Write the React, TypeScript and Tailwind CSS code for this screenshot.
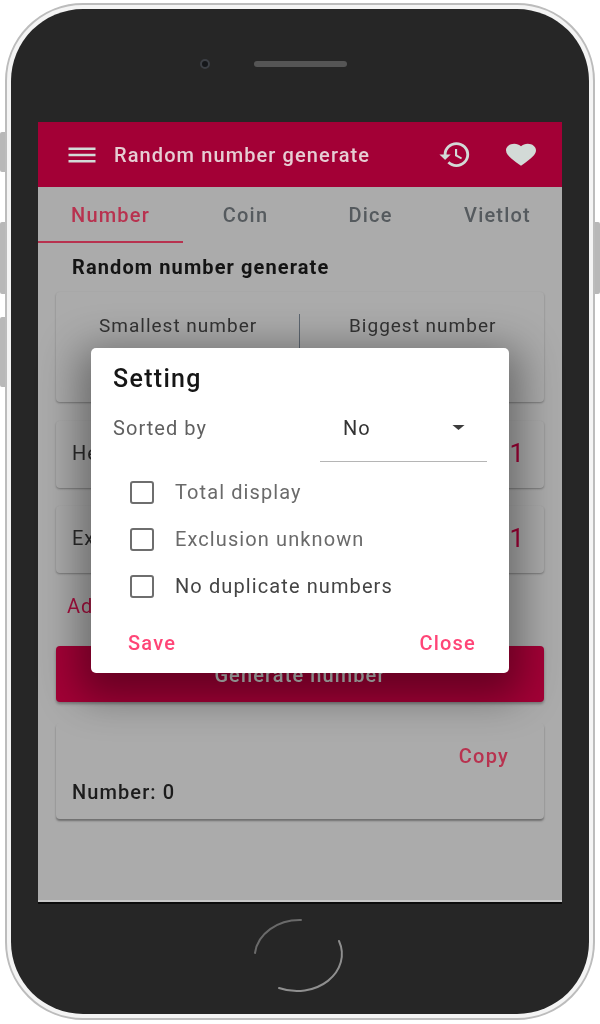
import { MdArrowDropDown, MdFavorite, MdHistory, MdMenu } from 'react-icons/md';

const tabs = [
  { label: 'Number', width: 'w-[145px]' },
  { label: 'Coin', width: 'w-[125px]' },
  { label: 'Dice', width: 'w-[125px]' },
  { label: 'Vietlot', width: 'w-[129px]' },
];
const options = ['Total display', 'Exclusion unknown', 'No duplicate numbers'];

function StepperCard({ label }: { label: string }) {
  return (
    <div className="flex h-[67px] items-center justify-between rounded-[4px] bg-[#ababab] pb-[3px] pl-4 pr-[20px] shadow-[0_1px_2px_rgba(0,0,0,0.3)]">
      <span className="text-[20px] tracking-[1px] text-[#2b2b2b]">{label}</span>
      <span className="text-[26px] text-[#a30036]">1</span>
    </div>
  );
}

export default function App() {
  return (
    <div className="h-[1024px] w-[600px] overflow-hidden bg-white pl-[5px] pt-[3px] font-['Roboto',sans-serif] blur-[0.7px]">
      <div className="relative h-[1017px] w-[590px] rounded-[78px] border-2 border-[#bcbcbc] bg-[#f4f4f4] p-[4px]">
        {/* side buttons */}
        <div className="absolute left-[-7px] top-[127px] h-[40px] w-[5px] rounded-l-[2px] bg-[#b8b8b8]" />
        <div className="absolute left-[-7px] top-[217px] h-[72px] w-[5px] rounded-l-[2px] bg-[#b8b8b8]" />
        <div className="absolute left-[-7px] top-[312px] h-[70px] w-[5px] rounded-l-[2px] bg-[#b8b8b8]" />
        <div className="absolute right-[-7px] top-[217px] h-[72px] w-[5px] rounded-r-[2px] bg-[#b8b8b8]" />

        <div className="flex h-full flex-col rounded-[72px] bg-[#262626] px-[27px]">
          {/* camera + speaker */}
          <div className="flex h-[113px] shrink-0 items-center justify-center gap-[44px] pb-[4px] pr-[54px]">
            <div className="h-[10px] w-[10px] rounded-full border-2 border-[#3c3f45] bg-[#15171a]" />
            <div className="h-[6px] w-[93px] rounded-full bg-[#555555]" />
          </div>

          {/* screen */}
          <div className="relative flex h-[780px] shrink-0 flex-col border-b-2 border-[#c8c8c8] bg-[#ababab] shadow-[0_2px_0_#0c0c0c]">
            <div className="flex h-[65px] shrink-0 items-center bg-[#a30036] pl-[26px] pr-[23px] text-[#d3dad7]">
              <MdMenu className="h-[30px] w-[36px]" preserveAspectRatio="none" />
              <span className="ml-[14px] flex-1 text-[20px] font-medium tracking-[1.1px] text-[#e6cdd3]">Random number generate</span>
              <MdHistory className="mr-[31px] h-[33px] w-[34px]" preserveAspectRatio="none" />
              <MdFavorite className="h-[29px] w-[36px]" preserveAspectRatio="none" />
            </div>

            <div className="flex h-[56px] shrink-0">
              {tabs.map((tab, i) => (
                <div
                  key={tab.label}
                  className={`flex items-center justify-center text-[20px] font-medium tracking-[1.2px] ${tab.width} ${
                    i === 0 ? 'border-b-2 border-[#b8324f] pt-[2px] text-[#b8324f]' : 'text-[#555a5e]'
                  }`}
                >
                  {tab.label}
                </div>
              ))}
            </div>

            <div className="flex flex-col px-[18px]">
              <h1 className="mt-[11px] pl-[16px] text-[20px] font-bold leading-[26px] tracking-[1.1px] text-[#141414]">
                Random number generate
              </h1>

              <div className="mt-[12px] flex h-[110px] rounded-[4px] bg-[#ababab] pt-[22px] shadow-[0_1px_2px_rgba(0,0,0,0.3)]">
                <div className="w-[243px] pl-[43px] text-[19px] leading-[24px] tracking-[1px] text-[#333333]">Smallest number</div>
                <div className="h-[40px] w-px bg-[#5d6670]" />
                <div className="flex-1 pl-[49px] text-[19px] leading-[24px] tracking-[1px] text-[#333333]">Biggest number</div>
              </div>

              <div className="mt-[19px] flex flex-col gap-[18px]">
                <StepperCard label="He" />
                <StepperCard label="Ex" />
              </div>

              <div className="mt-[21px] pl-[11px] text-[20px] leading-[24px] tracking-[1px] text-[#a8103f]">Ad</div>

              <div className="mt-[28px] flex h-[56px] items-center justify-center rounded-[4px] bg-[#a30036] pt-[2px] text-[20px] font-medium tracking-[1.1px] text-[#c9ccc9] shadow-[0_2px_3px_rgba(0,0,0,0.3)]">
                Generate number
              </div>

              <div className="mt-[21px] flex h-[96px] flex-col rounded-[4px] bg-[#ababab] px-[16px] shadow-[0_2px_2px_rgba(0,0,0,0.35)]">
                <div className="mt-[21px] self-end pr-[19px] text-[20px] font-medium leading-[24px] tracking-[1.2px] text-[#b8324f]">Copy</div>
                <div className="mt-[12px] text-[20px] font-medium leading-[24px] tracking-[1.1px] text-[#1c1c1c]">Number: 0</div>
              </div>
            </div>

            {/* settings dialog */}
            <div className="absolute left-[53px] top-[226px] flex h-[325px] w-[418px] flex-col rounded-[5px] bg-white px-[22px] shadow-[0_12px_40px_12px_rgba(0,0,0,0.38)]">
              <h2 className="mt-[16px] text-[25px] font-medium leading-[30px] tracking-[1.3px] text-[#161616]">Setting</h2>

              <div className="mt-[19px] flex items-start">
                <span className="w-[207px] pt-[2px] text-[20px] leading-[26px] tracking-[1.05px] text-[#5f5f5f]">Sorted by</span>
                <div className="flex h-[49px] w-[167px] items-start justify-between border-b border-[#b5b5b5] pl-[23px] pr-[14px] pt-[2px]">
                  <span className="text-[20px] leading-[26px] tracking-[1px] text-[#333333]">No</span>
                  <MdArrowDropDown className="h-[24px] w-[29px] text-[#3c3c3c]" preserveAspectRatio="none" />
                </div>
              </div>

              <div className="mt-[18px] flex flex-col gap-[23px] pl-[17px]">
                {options.map((option, i) => (
                  <label key={option} className="flex h-[24px] items-center gap-[21px]">
                    <span className="h-[23px] w-[24px] rounded-[3px] border-2 border-[#6e6e6e]" />
                    <span className={`text-[20px] tracking-[1.1px] ${i === 2 ? 'text-[#444444]' : 'text-[#6a6a6a]'}`}>{option}</span>
                  </label>
                ))}
              </div>

              <div className="mt-[33px] flex justify-between pl-[15px] pr-[11px] text-[20px] font-medium leading-[24px] tracking-[1.2px] text-[#ff4577]">
                <span>Save</span>
                <span>Close</span>
              </div>
            </div>
          </div>

          {/* home button */}
          <div className="flex flex-1 items-center justify-center pb-[2px]">
            <svg width="94" height="78" viewBox="0 0 94 78" fill="none" strokeLinecap="round">
              <path d="M2 35 A45 37 0 0 1 48 2" stroke="#6a6a6a" strokeWidth="2" />
              <path d="M86 23 A45 37 0 0 1 26 70" stroke="#8f8f8f" strokeWidth="2" />
            </svg>
          </div>
        </div>
      </div>
    </div>
  );
}
